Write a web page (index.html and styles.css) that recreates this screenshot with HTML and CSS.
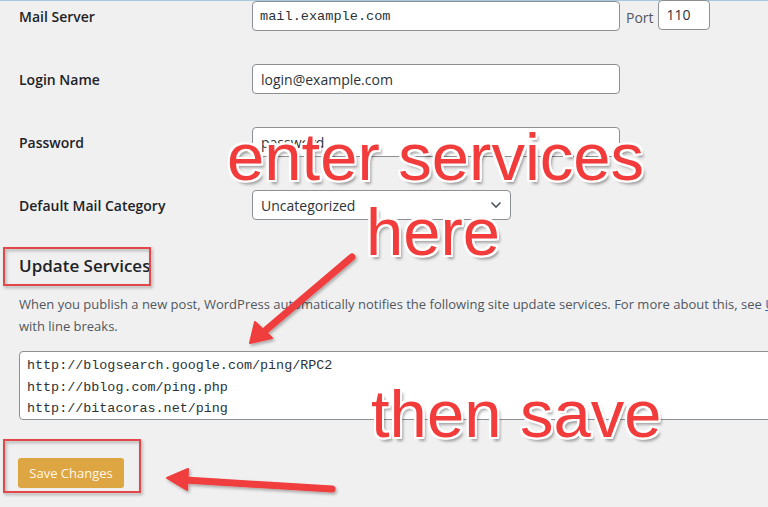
FILE: index.html
```html
<!DOCTYPE html>
<html lang="en">
<head>
    <meta charset="UTF-8">
    <meta name="viewport" content="width=device-width, initial-scale=1.0">
    <title>Writing Settings</title>
    <link rel="stylesheet" href="styles.css">
</head>
<body>
    <div class="page">
        <div class="row">
            <label class="row-label" for="mailserver">Mail Server</label>
            <input class="field code" id="mailserver" type="text" value="mail.example.com">
            <label class="port-label" for="mailport">Port</label>
            <input class="field port" id="mailport" type="text" value="110">
        </div>
        <div class="row">
            <label class="row-label" for="login">Login Name</label>
            <input class="field" id="login" type="text" value="login@example.com">
        </div>
        <div class="row">
            <label class="row-label" for="pass">Password</label>
            <input class="field" id="pass" type="text" value="password">
        </div>
        <div class="row">
            <label class="row-label" for="category">Default Mail Category</label>
            <div class="select">
                <span>Uncategorized</span>
                <svg width="12" height="8" viewBox="0 0 12 8"><path d="M1.5 1.5 6 6l4.5-4.5" fill="none" stroke="#50575e" stroke-width="1.6"/></svg>
            </div>
        </div>

        <h2 class="section-title">Update Services</h2>
        <p class="section-desc">When you publish a new post, WordPress automatically notifies the following site update services. For more about this, see <a href="#">Update Services</a> on the Codex. Separate multiple service URLs<br>with line breaks.</p>

        <textarea class="ping-sites" readonly>http://blogsearch.google.com/ping/RPC2
http://bblog.com/ping.php
http://bitacoras.net/ping
http://blo.gs/ping.php</textarea>

        <button class="save-btn" type="button">Save Changes</button>
    </div>

    <!-- annotations drawn on top of the settings page -->
    <div class="notes">
        <svg class="marks" width="768" height="507" viewBox="0 0 768 507">
            <defs>
                <filter id="shade" x="-20%" y="-20%" width="140%" height="140%">
                    <feDropShadow dx="1.5" dy="2" stdDeviation="1.5" flood-color="#000" flood-opacity="0.3"/>
                </filter>
            </defs>
            <g fill="none" stroke="#e3474a" stroke-width="2" filter="url(#shade)">
                <rect x="4" y="248" width="146" height="37"/>
                <rect x="4" y="440" width="136" height="52"/>
            </g>
            <g fill="#f03c3c" stroke="#f03c3c" stroke-linejoin="round" filter="url(#shade)">
                <line x1="352" y1="257" x2="266" y2="330" stroke-width="7" stroke-linecap="round"/>
                <polygon points="250,343 255,322 272,338" stroke-width="2"/>
                <line x1="332" y1="489" x2="185" y2="480" stroke-width="7" stroke-linecap="round"/>
                <polygon points="167,478 188,469 187,490" stroke-width="2"/>
            </g>
        </svg>
        <span class="note note-enter">enter services</span>
        <span class="note note-here">here</span>
        <span class="note note-save">then save</span>
    </div>
</body>
</html>
```

FILE: styles.css
```css
body {
    margin: 0;
    width: 768px;
    height: 507px;
    overflow: hidden;
    position: relative;
    background-color: #f0f0f1;
    font-family: 'Open Sans', sans-serif;
    color: #1d2327;
}
.page {
    width: 1100px;
    border-top: 1px solid #a9c8de;
    padding-left: 19px;
}
.row {
    display: flex;
    align-items: center;
    height: 30px;
    margin-bottom: 33px;
}
.row-label {
    width: 233px;
    flex: none;
    font-size: 14px;
    font-weight: 600;
}
.field {
    box-sizing: border-box;
    width: 368px;
    height: 30px;
    padding: 0 8px;
    border: 1px solid #8c8f94;
    border-radius: 4px;
    background-color: #fff;
    font-family: 'Open Sans', sans-serif;
    font-size: 14px;
    color: #2c3338;
}
.field.code {
    padding-left: 7px;
    font-family: 'Liberation Mono', monospace;
    font-size: 13.6px;
}
.port-label {
    margin: 2px 4px 0 6px;
    font-size: 14px;
    color: #50575e;
}
.field.port {
    width: 52px;
    margin-top: -3px;
}
.select {
    box-sizing: border-box;
    width: 259px;
    height: 30px;
    padding: 0 8px;
    border: 1px solid #8c8f94;
    border-radius: 4px;
    background-color: #fff;
    display: flex;
    align-items: center;
    justify-content: space-between;
    font-size: 14px;
    color: #2c3338;
}
.section-title {
    margin: 35px 0 0;
    font-size: 17px;
    font-weight: 600;
    line-height: 1.3;
}
.section-desc {
    margin: 16px 0 0;
    font-size: 13px;
    line-height: 22px;
    color: #50575e;
    white-space: nowrap;
}
.section-desc a {
    color: #2271b1;
}
.ping-sites {
    display: block;
    box-sizing: border-box;
    width: 900px;
    height: 69px;
    margin-top: 14px;
    padding: 3px 7px;
    border: 1px solid #8c8f94;
    border-radius: 4px;
    background-color: #fff;
    font-family: 'Liberation Mono', monospace;
    font-size: 13.4px;
    line-height: 21.5px;
    color: #2c3338;
    overflow: hidden;
    resize: none;
}
.save-btn {
    display: block;
    margin: 38px 0 0 -1px;
    width: 106px;
    height: 30px;
    padding: 0;
    border: none;
    border-radius: 3px;
    background-color: #dea543;
    color: #fff8ea;
    font-family: 'Open Sans', sans-serif;
    font-size: 13px;
}
.notes {
    position: absolute;
    inset: 0;
    pointer-events: none;
}
.marks {
    position: absolute;
    left: 0;
    top: 0;
}
.note {
    position: absolute;
    white-space: nowrap;
    font-family: 'Liberation Sans', Arial, sans-serif;
    font-size: 67px;
    line-height: 1;
    color: #f23c3c;
    text-shadow:
        2px 0 #fff, -2px 0 #fff, 0 2px #fff, 0 -2px #fff,
        2px 2px #fff, -2px -2px #fff, 2px -2px #fff, -2px 2px #fff,
        3px 4px 3px rgba(0, 0, 0, 0.35);
}
.note-enter {
    left: 227px;
    top: 123px;
}
.note-here {
    left: 366px;
    top: 198px;
}
.note-save {
    left: 371px;
    top: 380px;
}
```
